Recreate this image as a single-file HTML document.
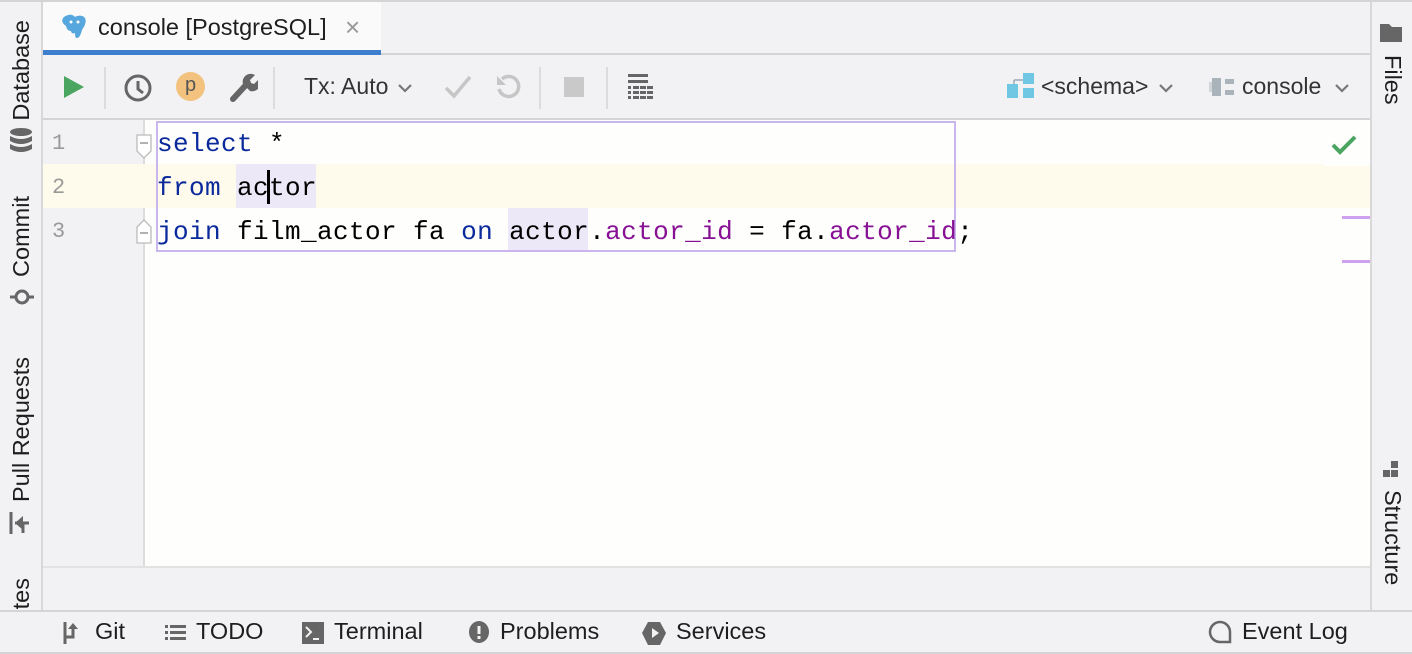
<!DOCTYPE html>
<html><head><meta charset="utf-8"><style>
*{margin:0;padding:0;box-sizing:border-box}
body{width:1412px;height:654px;overflow:hidden;background:#f2f2f4;font-family:"Liberation Sans",sans-serif;position:relative;color:#1e1e1e}
.a{position:absolute}
.vl{position:absolute;writing-mode:vertical-rl;transform:rotate(180deg);font-size:23.5px;color:#1e1e1e;white-space:nowrap}
.vr{position:absolute;writing-mode:vertical-rl;font-size:23.5px;color:#1e1e1e;white-space:nowrap}
.code{position:absolute;left:157px;font-family:"Liberation Mono",monospace;font-size:26px;letter-spacing:0.4px;line-height:44px;white-space:pre;color:#000}
.k{color:#0a2a9c}.p{color:#871094}
.ln{position:absolute;left:52px;font-family:"Liberation Mono",monospace;font-size:22px;color:#999}
.sb{position:absolute;top:618px;font-size:23.5px;color:#1e1e1e;white-space:nowrap}
.tb{position:absolute;top:73px;font-size:23px;color:#333;white-space:nowrap}
.sep{position:absolute;top:67px;width:2px;height:42px;background:#dcdcdc}
</style></head><body>
<div class="a" style="left:0;top:0;width:1412px;height:2px;background:#d4d4d4"></div>
<div class="a" style="left:41px;top:2px;width:2px;height:608px;background:#d8d8d8"></div>
<div class="a" style="left:1370px;top:2px;width:2px;height:608px;background:#d8d8d8"></div>
<div class="a" style="left:43px;top:2px;width:338px;height:52px;background:#fafafb"></div>
<div class="a" style="left:43px;top:50px;width:338px;height:5px;background:#3d7fcc"></div>
<div class="a" style="left:381px;top:53px;width:989px;height:2px;background:#d4d4d4"></div>
<svg class="a" style="left:60px;top:13px" width="28" height="30" viewBox="0 0 28 30"><path d="M4 4c4-3 9-3 11 0 3-2 8-2 10 1 2 4-1 9-3 12-1 3-2 8-5 8-2 0-2-3-2-5-2 1-4 0-4-2-2 0-4-1-5-5C2 10 1 7 4 4z" fill="#56a7dd"/><circle cx="11" cy="9" r="1.5" fill="#fff"/><circle cx="18" cy="9" r="1.5" fill="#fff"/></svg>
<div class="a" style="left:98px;top:14px;font-size:23.5px;color:#1e1e1e">console [PostgreSQL]</div>
<div class="a" style="left:345px;top:12px;font-size:26px;color:#999">×</div>
<div class="a" style="left:43px;top:118px;width:1327px;height:2px;background:#d4d4d4"></div>
<svg class="a" style="left:63px;top:75px" width="22" height="24"><path d="M1 1L21 12L1 23Z" fill="#4aa561"/></svg>
<div class="sep" style="left:104px"></div>
<svg class="a" style="left:123px;top:73px" width="30" height="30"><circle cx="15" cy="15" r="12" fill="none" stroke="#666" stroke-width="3"/><path d="M15 8v8l5 4" fill="none" stroke="#666" stroke-width="3"/></svg>
<div class="a" style="left:176px;top:72px;width:29px;height:29px;border-radius:50%;background:#f3c27e;font-size:20px;text-align:center;line-height:27px;color:#555">p</div>
<svg class="a" style="left:228px;top:71px" width="30" height="32"><path d="M5 28L17 15" stroke="#666" stroke-width="6" stroke-linecap="round"/><path d="M15 13a8 8 0 0 1 12-9l-5 5 1 3 3 1 5-5a8 8 0 0 1-9 12z" fill="#666"/></svg>
<div class="sep" style="left:273px"></div>
<div class="tb" style="left:304px">Tx: Auto</div>
<svg class="a" style="left:397px;top:83px" width="16" height="12"><path d="M2 2l6 6 6-6" fill="none" stroke="#777" stroke-width="2.2"/></svg>
<svg class="a" style="left:443px;top:73px" width="30" height="28"><path d="M3 15l8 8L27 4" fill="none" stroke="#c6c6c6" stroke-width="3.5"/></svg>
<svg class="a" style="left:494px;top:73px" width="28" height="28"><path d="M8 6a10 10 0 1 1-3 10" fill="none" stroke="#c6c6c6" stroke-width="3.5"/><path d="M3 3v9h9z" fill="#c6c6c6"/></svg>
<div class="sep" style="left:539px"></div>
<div class="a" style="left:564px;top:77px;width:20px;height:20px;background:#c9c9c9"></div>
<div class="sep" style="left:606px"></div>
<svg class="a" style="left:627px;top:72px" width="28" height="28"><g fill="#666"><rect x="1" y="2" width="20" height="3"/><rect x="1" y="8" width="20" height="3"/><rect x="1" y="14" width="3" height="3"/><rect x="6" y="14" width="20" height="3"/><rect x="1" y="19" width="3" height="3"/><rect x="6" y="19" width="20" height="3"/><rect x="1" y="24" width="3" height="3"/><rect x="6" y="24" width="20" height="3"/></g><g fill="#f2f2f4"><rect x="12" y="14" width="1" height="13"/><rect x="19" y="14" width="1" height="13"/></g></svg>
<svg class="a" style="left:1006px;top:72px" width="30" height="28"><path d="M8 8h10M8 8v8" stroke="#9ab" stroke-width="1.5" fill="none"/><rect x="17" y="1" width="11" height="11" fill="#6fc7e4"/><rect x="1" y="12" width="11" height="14" fill="#6fc7e4"/><rect x="17" y="16" width="11" height="10" fill="#6fc7e4"/></svg>
<div class="tb" style="left:1041px">&lt;schema&gt;</div>
<svg class="a" style="left:1158px;top:83px" width="16" height="12"><path d="M2 2l6 6 6-6" fill="none" stroke="#777" stroke-width="2.2"/></svg>
<svg class="a" style="left:1207px;top:75px" width="30" height="24"><path d="M5 3h9v18H5z" fill="#a9b3b9"/><path d="M2 7h3v10H2z" fill="#cfd5d8"/><rect x="18" y="4" width="9" height="5" fill="#a9b3b9"/><rect x="18" y="15" width="9" height="5" fill="#a9b3b9"/></svg>
<div class="tb" style="left:1242px">console</div>
<svg class="a" style="left:1334px;top:83px" width="16" height="12"><path d="M2 2l6 6 6-6" fill="none" stroke="#777" stroke-width="2.2"/></svg>
<div class="a" style="left:43px;top:120px;width:1327px;height:447px;background:#fefefd"></div>
<div class="a" style="left:43px;top:120px;width:101px;height:447px;background:#f2f2f4"></div>
<div class="a" style="left:143px;top:120px;width:2px;height:447px;background:#dcdcdc"></div>
<div class="a" style="left:43px;top:164px;width:1327px;height:44px;background:#fefbec"></div>
<div class="a" style="left:1323px;top:163px;width:47px;height:3px;background:#fefefd"></div>
<div class="ln" style="top:131px">1</div>
<div class="ln" style="top:175px">2</div>
<div class="ln" style="top:219px">3</div>
<svg class="a" style="left:135px;top:133px" width="18" height="28"><path d="M2 2h14v16l-7 7-7-7z" fill="#fff" stroke="#bbb" stroke-width="1.3"/><path d="M5 10h8" stroke="#999" stroke-width="1.5"/></svg>
<svg class="a" style="left:135px;top:217px" width="18" height="28"><path d="M2 26h14V10L9 3 2 10z" fill="#fff" stroke="#bbb" stroke-width="1.3"/><path d="M5 16h8" stroke="#999" stroke-width="1.5"/></svg>
<div class="a" style="left:236px;top:164px;width:80px;height:44px;background:#ece8f8"></div>
<div class="a" style="left:508px;top:208px;width:80px;height:43px;background:#ece8f8"></div>
<div class="a" style="left:156px;top:121px;width:800px;height:131px;border:2px solid #c9b6ee"></div>
<div class="code" style="top:122px"><span class="k">select</span> *
<span class="k">from</span> actor
<span class="k">join</span> film_actor fa <span class="k">on</span> actor.<span class="p">actor_id</span> = fa.<span class="p">actor_id</span>;</div>
<div class="a" style="left:267px;top:170px;width:3px;height:34px;background:#000"></div>
<svg class="a" style="left:1331px;top:135px" width="26" height="20"><path d="M2 10l7 7L24 2" fill="none" stroke="#4aa561" stroke-width="4"/></svg>
<div class="a" style="left:1342px;top:216px;width:28px;height:3px;background:#cf9ff0"></div>
<div class="a" style="left:1342px;top:260px;width:28px;height:3px;background:#cf9ff0"></div>
<div class="a" style="left:43px;top:566px;width:1327px;height:2px;background:#e2e2e2"></div>
<div class="a" style="left:0;top:610px;width:1412px;height:2px;background:#d4d4d4"></div>
<div class="a" style="left:0;top:652px;width:1412px;height:2px;background:#d4d4d4"></div>
<svg class="a" style="left:62px;top:621px" width="24" height="24"><path d="M3 1v22M3 16h8V6" stroke="#666" stroke-width="3" fill="none"/><path d="M6 8l5-6 5 6z" fill="#666"/></svg>
<div class="sb" style="left:95px">Git</div>
<svg class="a" style="left:165px;top:624px" width="22" height="18"><g fill="#666"><rect x="0" y="1" width="3" height="3"/><rect x="5" y="1" width="16" height="3"/><rect x="0" y="7" width="3" height="3"/><rect x="5" y="7" width="16" height="3"/><rect x="0" y="13" width="3" height="3"/><rect x="5" y="13" width="16" height="3"/></g></svg>
<div class="sb" style="left:196px">TODO</div>
<svg class="a" style="left:302px;top:621px" width="24" height="24"><rect x="0" y="1" width="22" height="22" fill="#666"/><path d="M4 6l5 5-5 5M11 18h6" stroke="#f2f2f4" stroke-width="2" fill="none"/></svg>
<div class="sb" style="left:334px">Terminal</div>
<svg class="a" style="left:468px;top:621px" width="24" height="24"><ellipse cx="11" cy="11" rx="10" ry="11" fill="#666"/><rect x="9.5" y="5" width="3" height="8" fill="#f2f2f4"/><rect x="9.5" y="15" width="3" height="3" fill="#f2f2f4"/></svg>
<div class="sb" style="left:500px">Problems</div>
<svg class="a" style="left:642px;top:621px" width="26" height="26"><path d="M6 1h12l6 11-6 12H6L0 12z" fill="#666"/><path d="M10 7l7 5-7 5z" fill="#f2f2f4"/></svg>
<div class="sb" style="left:676px">Services</div>
<svg class="a" style="left:1208px;top:620px" width="28" height="28"><path d="M12 2a10 10 0 1 0 0 20h10V12A10 10 0 0 0 12 2z" fill="none" stroke="#666" stroke-width="2.5"/></svg>
<div class="sb" style="left:1242px">Event Log</div>
<div class="vl" style="left:8px;top:20px">Database</div>
<svg class="a" style="left:9px;top:128px" width="24" height="26"><g fill="#666"><ellipse cx="12" cy="4" rx="11" ry="4"/><path d="M1 8q11 6 22 0v5q-11 6-22 0z"/><path d="M1 16q11 6 22 0v5q-11 6-22 0z"/></g></svg>
<div class="vl" style="left:8px;top:196px">Commit</div>
<svg class="a" style="left:9px;top:288px" width="26" height="18"><path d="M1 9h24" stroke="#666" stroke-width="3"/><circle cx="13" cy="9" r="6" fill="#f2f2f4" stroke="#666" stroke-width="3"/></svg>
<div class="vl" style="left:8px;top:357px">Pull Requests</div>
<svg class="a" style="left:9px;top:511px" width="24" height="24"><path d="M2 1v22" stroke="#666" stroke-width="3"/><path d="M6 12h14M14 12v10" stroke="#666" stroke-width="3" fill="none"/><path d="M6 12l8-7v14z" fill="#666"/></svg>
<div class="a" style="left:0;top:570px;width:41px;height:40px;overflow:hidden"><div class="vl" style="left:8px;top:8px">tes</div></div>
<svg class="a" style="left:1380px;top:24px" width="24" height="20"><path d="M0 0h9l3 3h10v15H0z" fill="#666"/></svg>
<div class="vr" style="left:1379px;top:55px">Files</div>
<svg class="a" style="left:1382px;top:460px" width="20" height="20"><g fill="#666"><rect x="9" y="1" width="7" height="7"/><rect x="1" y="10" width="7" height="7"/><rect x="9" y="10" width="7" height="7"/></g></svg>
<div class="vr" style="left:1379px;top:490px">Structure</div>
</body></html>
